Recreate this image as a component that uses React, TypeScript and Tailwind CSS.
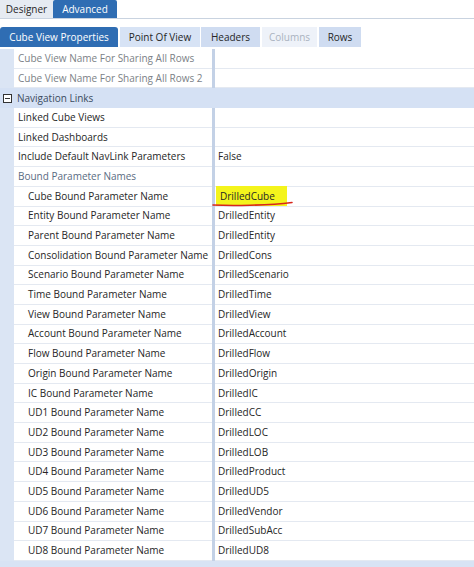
import React from 'react';

type Row = { label: string; value?: string; kind?: 'dim' | 'cat' | 'sub' | 'item' | 'child' };

const rows: Row[] = [
  { label: 'Cube View Name For Sharing All Rows', kind: 'dim' },
  { label: 'Cube View Name For Sharing All Rows 2', kind: 'dim' },
  { label: 'Navigation Links', kind: 'cat' },
  { label: 'Linked Cube Views' },
  { label: 'Linked Dashboards' },
  { label: 'Include Default NavLink Parameters', value: 'False' },
  { label: 'Bound Parameter Names', kind: 'sub' },
  { label: 'Cube Bound Parameter Name', value: 'DrilledCube', kind: 'child' },
  { label: 'Entity Bound Parameter Name', value: 'DrilledEntity', kind: 'child' },
  { label: 'Parent Bound Parameter Name', value: 'DrilledEntity', kind: 'child' },
  { label: 'Consolidation Bound Parameter Name', value: 'DrilledCons', kind: 'child' },
  { label: 'Scenario Bound Parameter Name', value: 'DrilledScenario', kind: 'child' },
  { label: 'Time Bound Parameter Name', value: 'DrilledTime', kind: 'child' },
  { label: 'View Bound Parameter Name', value: 'DrilledView', kind: 'child' },
  { label: 'Account Bound Parameter Name', value: 'DrilledAccount', kind: 'child' },
  { label: 'Flow Bound Parameter Name', value: 'DrilledFlow', kind: 'child' },
  { label: 'Origin Bound Parameter Name', value: 'DrilledOrigin', kind: 'child' },
  { label: 'IC Bound Parameter Name', value: 'DrilledIC', kind: 'child' },
  { label: 'UD1 Bound Parameter Name', value: 'DrilledCC', kind: 'child' },
  { label: 'UD2 Bound Parameter Name', value: 'DrilledLOC', kind: 'child' },
  { label: 'UD3 Bound Parameter Name', value: 'DrilledLOB', kind: 'child' },
  { label: 'UD4 Bound Parameter Name', value: 'DrilledProduct', kind: 'child' },
  { label: 'UD5 Bound Parameter Name', value: 'DrilledUD5', kind: 'child' },
  { label: 'UD6 Bound Parameter Name', value: 'DrilledVendor', kind: 'child' },
  { label: 'UD7 Bound Parameter Name', value: 'DrilledSubAcc', kind: 'child' },
  { label: 'UD8 Bound Parameter Name', value: 'DrilledUD8', kind: 'child' },
];

const font = { fontFamily: '"Open Sans", "Noto Sans", sans-serif' };

const PropRow = ({ row }: { row: Row }) => {
  if (row.kind === 'cat') {
    return (
      <div className="flex h-[19.7px] items-center bg-[#d5e1f4]">
        <div className="flex w-[14px] shrink-0 justify-center">
          <span className="flex h-[9px] w-[9px] items-center justify-center border border-[#333] bg-white">
            <span className="h-px w-[5px] bg-[#333]" />
          </span>
        </div>
        <span className="pl-[3px] text-[#3b4a5e]">{row.label}</span>
      </div>
    );
  }
  const isHighlight = row.value === 'DrilledCube';
  return (
    <div className="flex h-[19.7px]">
      <div className="w-[14px] shrink-0 bg-[#dbe5f4]" />
      <div
        className={`flex w-[198px] shrink-0 items-center border-b border-[#e4e9f1] bg-white ${
          row.kind === 'child' ? 'pl-[14px]' : 'pl-[4px]'
        } ${row.kind === 'dim' ? 'text-[#7b7f86]' : row.kind === 'sub' ? 'pl-[3px] text-[#5a6b82]' : 'text-[#262626]'}`}
      >
        <span className="whitespace-nowrap">{row.label}</span>
      </div>
      <div className="w-[3px] shrink-0 bg-[#c3d1e6]" />
      <div className="relative flex flex-1 items-center border-b border-[#e4e9f1] bg-white pl-[3px] text-[#262626]">
        {isHighlight ? (
          <>
            <span className="-ml-[2px] bg-[#f4f41c] pl-[4px] pr-[12px] leading-[20px]">{row.value}</span>
            <svg className="absolute left-[-3px] top-[12px]" width="84" height="8" viewBox="0 0 84 8">
              <path d="M1 6 C 20 7, 55 6.5, 80 3.5" stroke="#d8261c" strokeWidth="1.6" fill="none" strokeLinecap="round" />
            </svg>
          </>
        ) : (
          <span className="whitespace-nowrap">{row.value}</span>
        )}
      </div>
    </div>
  );
};

const App = () => {
  return (
    <div className="h-[567px] w-[474px] overflow-hidden bg-white text-[10px]" style={font}>
      {/* top tabs */}
      <div className="flex h-[19px] items-stretch border-b border-[#c9d3e0]">
        <div className="flex w-[53px] items-center justify-center bg-[#e6ebf2] text-[#262626]">Designer</div>
        <div className="flex w-[64px] items-center justify-center rounded-t-[2px] bg-[#2f6db3] text-white">Advanced</div>
      </div>

      {/* sub tabs */}
      <div className="mt-[8px] flex h-[20px] items-stretch gap-[2px]">
        <div className="flex w-[118px] items-center justify-center rounded-t-[3px] bg-[#2f6db3] text-white">Cube View Properties</div>
        <div className="flex w-[80px] items-center justify-center bg-[#d7e3f5] text-[#262626]">Point Of View</div>
        <div className="-ml-[1px] flex w-[59px] items-center justify-center bg-[#cfdcf1] text-[#262626]">Headers</div>
        <div className="flex w-[55px] items-center justify-center bg-[#eef2f9] text-[#aab3bf]">Columns</div>
        <div className="flex w-[42px] items-center justify-center bg-[#cfdcf1] text-[#262626]">Rows</div>
      </div>

      {/* property grid */}
      <div className="mt-[2px] border-b-[6px] border-[#d8e3f4]">
        {rows.map((r, i) => (
          <PropRow key={i} row={r} />
        ))}
      </div>
    </div>
  );
};

export default App;
